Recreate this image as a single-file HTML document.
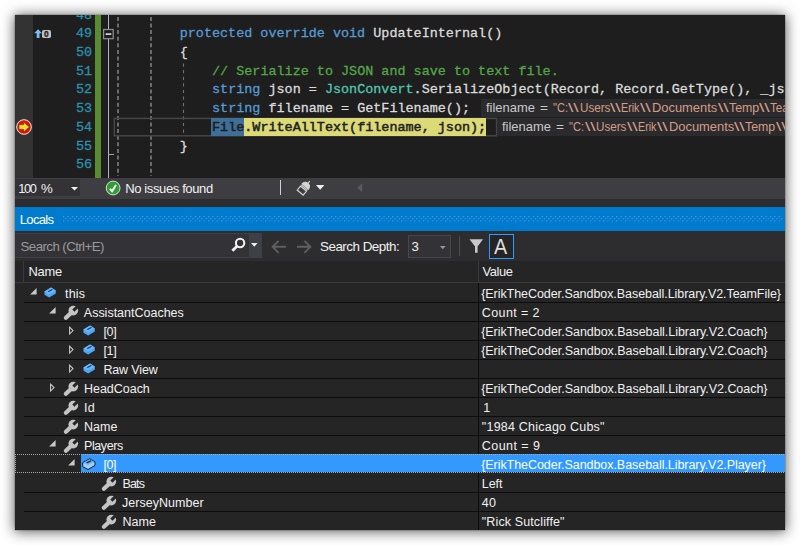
<!DOCTYPE html>
<html><head><meta charset="utf-8"><title>Locals</title>
<style>
html,body{margin:0;padding:0;background:#fff;width:800px;height:545px;overflow:hidden}
.win{position:absolute;left:15px;top:15px;width:770px;height:514.5px;overflow:hidden;background:#252526;box-shadow:0 1px 12px 1px rgba(0,0,0,0.62),0 0 1px rgba(0,0,0,0.8)}
.o{position:absolute;left:-15px;top:-15px;width:800px;height:545px}
.o>*{position:absolute;white-space:pre}
.o>div{box-sizing:content-box}
.s{font-family:"Liberation Sans", sans-serif}
.m{font-family:"Liberation Mono", monospace;font-size:13.450px;line-height:18.7px;padding-top:1.4px;-webkit-text-stroke:0.28px}
.il{font-size:13.4px;line-height:20px;width:300px;height:20px}
.il>span{position:absolute;top:0;transform-origin:0 0;white-space:pre}
svg{overflow:visible}
</style></head><body>
<div class="win"><div class="o">
<div style="left:15px;top:15px;width:770px;height:163px;background:#1e1e1e;"></div>
<div style="left:15px;top:15px;width:18px;height:163px;background:#333333;"></div>
<div style="left:95px;top:15px;width:5.7px;height:163px;background:#5a8a33;"></div>
<div style="left:107.6px;top:15px;width:1.2px;height:163px;background:#b4b4b4;"></div>
<div style="left:108px;top:154px;width:5.5px;height:1.1px;background:#a5a5a5;"></div>
<svg style="left:0;top:0" width="800" height="545"><rect x="103.6" y="29.5" width="9.6" height="9.2" fill="#1e1e1e" stroke="#8e8e8e" stroke-width="1.2"/><path d="M105.6 34.1H111.3" stroke="#d6d6d6" stroke-width="1.7"/></svg>
<svg style="left:0;top:0" width="800" height="545"><path d="M118.0 15V176" stroke="#858585" stroke-width="1.5" stroke-dasharray="4 2.6" stroke-dashoffset="-1.9" fill="none"/></svg>
<svg style="left:0;top:0" width="800" height="545"><path d="M151.0 15V176" stroke="#858585" stroke-width="1.5" stroke-dasharray="4 2.6" stroke-dashoffset="-1.9" fill="none"/></svg>
<svg style="left:0;top:0" width="800" height="545"><path d="M183.5 62V133.5" stroke="#707070" stroke-width="1.1" stroke-dasharray="3.2 3.4" stroke-dashoffset="-1.5" fill="none"/></svg>
<svg style="left:0;top:0" width="800" height="545"><rect x="114.3" y="118.4" width="382.3" height="17.4" fill="none" stroke="#464646" stroke-width="1.5"/></svg>
<div style="left:497px;top:118px;width:288px;height:17.8px;background:#2b2b2d;"></div>
<div style="left:480.6px;top:99.4px;width:305px;height:17.6px;background:#2b2b2d;"></div>
<div style="left:211.3px;top:118px;width:32.6px;height:18.3px;background:#3f6f99;"></div>
<div style="left:243.9px;top:118px;width:242.6px;height:18.3px;background:#dcd977;"></div>
<span class="m" style="left:76.0px;top:5.30px;color:#2b91af">48</span>
<span class="m" style="left:76.0px;top:24.00px;color:#2b91af">49</span>
<span class="m" style="left:76.0px;top:42.70px;color:#2b91af">50</span>
<span class="m" style="left:76.0px;top:61.40px;color:#2b91af">51</span>
<span class="m" style="left:76.0px;top:80.10px;color:#2b91af">52</span>
<span class="m" style="left:76.0px;top:98.80px;color:#2b91af">53</span>
<span class="m" style="left:76.0px;top:117.50px;color:#2b91af">54</span>
<span class="m" style="left:76.0px;top:136.20px;color:#2b91af">55</span>
<span class="m" style="left:76.0px;top:154.90px;color:#2b91af">56</span>
<span class="m" style="left:179.72px;top:24.00px"><span style="color:#569cd6">protected override void</span><span style="color:#dcdcdc"> UpdateInternal()</span></span>
<span class="m" style="left:179.72px;top:42.70px"><span style="color:#dcdcdc">{</span></span>
<span class="m" style="left:212.00px;top:61.40px"><span style="color:#57a64a">// Serialize to JSON and save to text file.</span></span>
<span class="m" style="left:212.00px;top:80.10px"><span style="color:#569cd6">string</span><span style="color:#dcdcdc"> json = </span><span style="color:#4ec9b0">JsonConvert</span><span style="color:#dcdcdc">.SerializeObject(Record, Record.GetType(), _jsonSettings);</span></span>
<span class="m" style="left:212.00px;top:98.80px"><span style="color:#569cd6">string</span><span style="color:#dcdcdc"> filename = GetFilename();</span></span>
<span class="m" style="left:212.00px;top:117.50px"><span style="color:#1e1e1e;-webkit-text-stroke:0.5px">File.WriteAllText(filename, json);</span></span>
<span class="m" style="left:179.72px;top:136.20px"><span style="color:#dcdcdc">}</span></span>
<span class="s il" style="left:486px;top:98px"><span style="left:0.0px;color:#c8c8c8;transform:scaleX(0.967)">filename</span><span style="left:53.9px;color:#c8c8c8;transform:scaleX(1.021)">=</span><span style="left:66.5px;color:#d69d85;transform:scaleX(0.826)">"C:</span><span style="left:82.4px;color:#d69d85;transform:scaleX(1.439)">\\</span><span style="left:93.8px;color:#d69d85;transform:scaleX(0.869)">Users</span><span style="left:124.4px;color:#d69d85;transform:scaleX(1.439)">\\</span><span style="left:135.2px;color:#d69d85;transform:scaleX(0.800)">Erik</span><span style="left:154.2px;color:#d69d85;transform:scaleX(1.439)">\\</span><span style="left:166.2px;color:#d69d85;transform:scaleX(0.962)">Documents</span><span style="left:231.6px;color:#d69d85;transform:scaleX(1.439)">\\</span><span style="left:242.6px;color:#d69d85;transform:scaleX(0.922)">Temp</span><span style="left:273.4px;color:#d69d85;transform:scaleX(1.439)">\\</span><span style="left:283.9px;color:#d69d85;transform:scaleX(0.870)">Team</span><span style="left:322.0px;color:#d69d85;transform:scaleX(0.939)">1984</span><span style="left:354.0px;color:#d69d85;transform:scaleX(0.976)">Chicago</span><span style="left:406.0px;color:#d69d85;transform:scaleX(0.933)">Cubs.json"</span></span>
<span class="s il" style="left:502.4px;top:116.6px"><span style="left:0.0px;color:#c8c8c8;transform:scaleX(0.967)">filename</span><span style="left:53.9px;color:#c8c8c8;transform:scaleX(1.021)">=</span><span style="left:66.5px;color:#d69d85;transform:scaleX(0.826)">"C:</span><span style="left:82.4px;color:#d69d85;transform:scaleX(1.439)">\\</span><span style="left:93.8px;color:#d69d85;transform:scaleX(0.869)">Users</span><span style="left:124.4px;color:#d69d85;transform:scaleX(1.439)">\\</span><span style="left:135.2px;color:#d69d85;transform:scaleX(0.800)">Erik</span><span style="left:154.2px;color:#d69d85;transform:scaleX(1.439)">\\</span><span style="left:166.2px;color:#d69d85;transform:scaleX(0.962)">Documents</span><span style="left:231.6px;color:#d69d85;transform:scaleX(1.439)">\\</span><span style="left:242.6px;color:#d69d85;transform:scaleX(0.922)">Temp</span><span style="left:273.4px;color:#d69d85;transform:scaleX(1.439)">\\</span><span style="left:283.9px;color:#d69d85;transform:scaleX(0.870)">Team</span><span style="left:322.0px;color:#d69d85;transform:scaleX(0.939)">1984</span><span style="left:354.0px;color:#d69d85;transform:scaleX(0.976)">Chicago</span><span style="left:406.0px;color:#d69d85;transform:scaleX(0.933)">Cubs.json"</span></span>
<svg style="left:16px;top:118.5px" width="16" height="16" viewBox="0 0 16 16"><circle cx="8" cy="8" r="7.3" fill="#e51400" stroke="#f4e8e8" stroke-width="1"/><path d="M2.9 5.6H7.5V3.1L13.6 8L7.5 12.9V10.4H2.9Z" fill="#ffd82a" stroke="#5a3a2a" stroke-width="0.8" stroke-linejoin="round"/></svg>
<svg style="left:34px;top:29px" width="9" height="10" viewBox="0 0 9 10"><path d="M4.1 0.2L8 4.3H5.5V9H2.7V4.3H0.2Z" fill="#75beff"/></svg>
<div style="left:42.4px;top:30.3px;width:8.2px;height:7.8px;background:#c2c2c2;border-radius:1.8px"></div>
<span class="s" style="left:43.9px;top:29.7px;font-size:8.4px;line-height:9px;font-weight:bold;color:#1e1e1e;-webkit-text-stroke:0.3px #1e1e1e">0</span>
<div style="left:15px;top:178px;width:770px;height:20.5px;background:#3e3e42;"></div>
<div style="left:15px;top:179px;width:65px;height:17px;background:#333337;"></div>
<div style="left:15px;top:198.5px;width:770px;height:8.6px;background:#2d2d30;"></div>
<span class="s" style="left:18.2px;top:178.50px;font-size:12.8px;line-height:20px;color:#f1f1f1;letter-spacing:-1.288px;">100</span>
<span class="s" style="left:41.0px;top:178.50px;font-size:13.2px;line-height:20px;color:#f1f1f1;letter-spacing:-2.248px;">%</span>
<svg style="left:71px;top:186.5px" width="7" height="4" viewBox="0 0 7 4"><path d="M0 0H7L3.5 3.6Z" fill="#f1f1f1"/></svg>
<svg style="left:105px;top:179.5px" width="16" height="16" viewBox="0 0 16 16"><circle cx="8.1" cy="8" r="6.9" fill="#2f9e34" stroke="#dcdcdc" stroke-width="1"/><path d="M5 8.8L7.1 11.2L11 4.9" fill="none" stroke="#fff" stroke-width="1.9"/></svg>
<span class="s" style="left:125.3px;top:178.50px;font-size:13px;line-height:20px;color:#f1f1f1;letter-spacing:-0.386px;">No issues found</span>
<div style="left:280.2px;top:180px;width:1.3px;height:14.5px;background:#d0d0d0;"></div>
<svg style="left:296px;top:179px" width="17" height="17" viewBox="0 0 17 17"><g transform="rotate(40 8.5 8.5)" fill="none" stroke="#d6d6d6" stroke-width="1.1"><path d="M8.5 0.2V3.2"/><path d="M4.4 7.2A4.1 4.1 0 0 1 12.6 7.2Z" fill="#d6d6d6"/><path d="M4.4 8.6H12.6"/><rect x="4.6" y="10" width="7.8" height="5.2"/></g></svg>
<svg style="left:315.5px;top:185px" width="9" height="5" viewBox="0 0 9 5"><path d="M0 0H8.4L4.2 4.8Z" fill="#f1f1f1"/></svg>
<svg style="left:357px;top:183px" width="6" height="10" viewBox="0 0 6 10"><path d="M5.2 0.2V9.2L0.2 4.7Z" fill="#5a5a5e"/></svg>
<div style="left:15px;top:206.6px;width:770px;height:24.6px;background:#007acc;"></div>
<span class="s" style="left:19.8px;top:209.50px;font-size:13.1px;line-height:20px;color:#ffffff;letter-spacing:-0.732px;">Locals</span>
<div style="left:62.9px;top:216.1px;width:720px;height:5.6px;background-image:radial-gradient(circle at 0.55px 0.55px,#46a0e2 0.6px,transparent 0.9px),radial-gradient(circle at 0.55px 0.55px,#46a0e2 0.6px,transparent 0.9px);background-size:4.4px 4.4px;background-position:0 0,2.2px 2.2px"></div>
<div style="left:15px;top:231.4px;width:770px;height:29.6px;background:#2d2d30;"></div>
<div style="left:15px;top:233px;width:247.2px;height:24.7px;background:#3f3f46;"></div>
<div style="left:15px;top:234.2px;width:233.8px;height:22.4px;background:#333337;"></div>
<span class="s" style="left:20.6px;top:236.50px;font-size:13.3px;line-height:20px;color:#999999;letter-spacing:-0.588px;">Search (Ctrl+E)</span>
<svg style="left:230px;top:236px" width="17" height="17" viewBox="0 0 17 17"><circle cx="10.1" cy="7" r="4.2" fill="none" stroke="#f1f1f1" stroke-width="2.1"/><path d="M7.2 10L2.4 14.8" stroke="#f1f1f1" stroke-width="2.8"/></svg>
<svg style="left:251.2px;top:243px" width="7" height="4" viewBox="0 0 7 4"><path d="M0 0H6.6L3.3 3.7Z" fill="#f1f1f1"/></svg>
<svg style="left:271px;top:239px" width="16" height="16" viewBox="0 0 16 16"><path d="M15 7.8H2.2M7.6 1.8L1.6 7.8L7.6 13.8" fill="none" stroke="#5f5f63" stroke-width="1.9"/></svg>
<svg style="left:295.5px;top:239px" width="16" height="16" viewBox="0 0 16 16"><path d="M1 7.8H13.8M8.4 1.8L14.4 7.8L8.4 13.8" fill="none" stroke="#5f5f63" stroke-width="1.9"/></svg>
<span class="s" style="left:320.0px;top:236.50px;font-size:13.4px;line-height:20px;color:#f1f1f1;letter-spacing:-0.499px;">Search Depth:</span>
<div style="left:407.5px;top:235.2px;width:41.2px;height:20.4px;background:#333337;border:1.1px solid #47474b"></div>
<span class="s" style="left:411.6px;top:236.50px;font-size:13.2px;line-height:20px;color:#f1f1f1;">3</span>
<svg style="left:440px;top:245.5px" width="6" height="4" viewBox="0 0 6 4"><path d="M0 0H5.6L2.8 3.3Z" fill="#999"/></svg>
<div style="left:458.7px;top:236px;width:1.1px;height:20px;background:#4d4d50;"></div>
<svg style="left:469px;top:239px" width="15" height="15" viewBox="0 0 15 15"><path d="M0.5 0.3H14L8.6 7.4V13.8H6V7.4Z" fill="#c8c8c8"/></svg>
<div style="left:488.8px;top:233.8px;width:22.8px;height:22.8px;background:#252526;border:1.1px solid #3399ff"></div>
<span class="s" style="left:494.3px;top:234.5px;font-size:21.5px;line-height:24px;color:#dedede;transform:scaleX(0.92);transform-origin:0 0">A</span>
<div style="left:15px;top:261px;width:770px;height:270px;background:#252526;"></div>
<div style="left:15px;top:282.1px;width:770px;height:1px;background:#3a3a3d;"></div>
<div style="left:23px;top:261px;width:1px;height:21.4px;background:#3a3a3d;"></div>
<div style="left:477.6px;top:261px;width:1px;height:21.4px;background:#38383b;"></div>
<div style="left:477.5px;top:283px;width:1.1px;height:250px;background:#0c0c0c;"></div>
<span class="s" style="left:28.5px;top:262.00px;font-size:12.9px;line-height:20px;color:#f1f1f1;letter-spacing:-0.248px;">Name</span>
<span class="s" style="left:482.4px;top:262.00px;font-size:12.9px;line-height:20px;color:#f1f1f1;letter-spacing:-0.364px;">Value</span>
<div style="left:24px;top:301.6px;width:761px;height:1.1px;background:#0c0c0c;"></div>
<svg style="left:30.0px;top:288.3px" width="7" height="7" viewBox="0 0 7 7"><path d="M6.6 0.1V6.6H0.1Z" fill="#c8c8c8"/></svg>
<svg style="left:44.3px;top:287.1px" width="13" height="11" viewBox="0 0 13 11"><path d="M0.4 4.5L7.1 0.5L11.8 3.5V6.6L5.2 10.5L0.5 7.8Z" fill="#4fa6f7"/><path d="M0.4 4.5L7.1 0.5L11.8 3.5L5.2 7.3Z" fill="#6bb7ff"/><path d="M3.7 4.2L7.9 2L9 2.7L4.8 4.9Z" fill="#1d3c5c"/></svg>
<span class="s" style="left:65.0px;top:284.00px;font-size:12.5px;line-height:20px;color:#f1f1f1;letter-spacing:0.188px;">this</span>
<span class="s" style="left:481.2px;top:284.00px;font-size:12.5px;line-height:20px;color:#f1f1f1;letter-spacing:-0.059px;">{ErikTheCoder.Sandbox.Baseball.Library.V2.TeamFile}</span>
<div style="left:24px;top:320.6px;width:761px;height:1.1px;background:#0c0c0c;"></div>
<svg style="left:49.2px;top:307.3px" width="7" height="7" viewBox="0 0 7 7"><path d="M6.6 0.1V6.6H0.1Z" fill="#c8c8c8"/></svg>
<svg style="left:62.6px;top:304.9px" width="16" height="16" viewBox="0 0 16 16"><path d="M10.3 5.9L2.9 12.8" stroke="#c4c4c4" stroke-width="4.2" stroke-linecap="round" fill="none"/><circle cx="10.3" cy="5.6" r="4.85" fill="#c4c4c4"/><path d="M9.3 4.5L14.4 -0.6L16.6 1.6L11.5 6.7Z" fill="#252526"/></svg>
<span class="s" style="left:83.8px;top:303.00px;font-size:12.5px;line-height:20px;color:#f1f1f1;letter-spacing:-0.004px;">AssistantCoaches</span>
<span class="s" style="left:481.8px;top:303.00px;font-size:12.5px;line-height:20px;color:#f1f1f1;letter-spacing:0.392px;">Count = 2</span>
<div style="left:24px;top:339.6px;width:761px;height:1.1px;background:#0c0c0c;"></div>
<svg style="left:68.8px;top:326.0px" width="6" height="10" viewBox="0 0 6 10"><path d="M0.6 1.2L4 4.6L0.6 8Z" fill="none" stroke="#cdcdcd" stroke-width="1.05"/></svg>
<svg style="left:82.7px;top:325.1px" width="13" height="11" viewBox="0 0 13 11"><path d="M0.4 4.5L7.1 0.5L11.8 3.5V6.6L5.2 10.5L0.5 7.8Z" fill="#4fa6f7"/><path d="M0.4 4.5L7.1 0.5L11.8 3.5L5.2 7.3Z" fill="#6bb7ff"/><path d="M3.7 4.2L7.9 2L9 2.7L4.8 4.9Z" fill="#1d3c5c"/></svg>
<span class="s" style="left:103.4px;top:322.00px;font-size:12.5px;line-height:20px;color:#f1f1f1;letter-spacing:-0.338px;">[0]</span>
<span class="s" style="left:481.2px;top:322.00px;font-size:12.5px;line-height:20px;color:#f1f1f1;letter-spacing:-0.039px;">{ErikTheCoder.Sandbox.Baseball.Library.V2.Coach}</span>
<div style="left:24px;top:358.6px;width:761px;height:1.1px;background:#0c0c0c;"></div>
<svg style="left:68.8px;top:345.0px" width="6" height="10" viewBox="0 0 6 10"><path d="M0.6 1.2L4 4.6L0.6 8Z" fill="none" stroke="#cdcdcd" stroke-width="1.05"/></svg>
<svg style="left:82.7px;top:344.1px" width="13" height="11" viewBox="0 0 13 11"><path d="M0.4 4.5L7.1 0.5L11.8 3.5V6.6L5.2 10.5L0.5 7.8Z" fill="#4fa6f7"/><path d="M0.4 4.5L7.1 0.5L11.8 3.5L5.2 7.3Z" fill="#6bb7ff"/><path d="M3.7 4.2L7.9 2L9 2.7L4.8 4.9Z" fill="#1d3c5c"/></svg>
<span class="s" style="left:103.4px;top:341.00px;font-size:12.5px;line-height:20px;color:#f1f1f1;letter-spacing:-0.338px;">[1]</span>
<span class="s" style="left:481.2px;top:341.00px;font-size:12.5px;line-height:20px;color:#f1f1f1;letter-spacing:-0.039px;">{ErikTheCoder.Sandbox.Baseball.Library.V2.Coach}</span>
<div style="left:24px;top:377.6px;width:761px;height:1.1px;background:#0c0c0c;"></div>
<svg style="left:68.8px;top:364.0px" width="6" height="10" viewBox="0 0 6 10"><path d="M0.6 1.2L4 4.6L0.6 8Z" fill="none" stroke="#cdcdcd" stroke-width="1.05"/></svg>
<svg style="left:82.7px;top:363.1px" width="13" height="11" viewBox="0 0 13 11"><path d="M0.4 4.5L7.1 0.5L11.8 3.5V6.6L5.2 10.5L0.5 7.8Z" fill="#4fa6f7"/><path d="M0.4 4.5L7.1 0.5L11.8 3.5L5.2 7.3Z" fill="#6bb7ff"/><path d="M3.7 4.2L7.9 2L9 2.7L4.8 4.9Z" fill="#1d3c5c"/></svg>
<span class="s" style="left:103.4px;top:360.00px;font-size:12.5px;line-height:20px;color:#f1f1f1;letter-spacing:-0.139px;">Raw View</span>
<div style="left:24px;top:396.6px;width:761px;height:1.1px;background:#0c0c0c;"></div>
<svg style="left:49.6px;top:383.0px" width="6" height="10" viewBox="0 0 6 10"><path d="M0.6 1.2L4 4.6L0.6 8Z" fill="none" stroke="#cdcdcd" stroke-width="1.05"/></svg>
<svg style="left:62.6px;top:380.9px" width="16" height="16" viewBox="0 0 16 16"><path d="M10.3 5.9L2.9 12.8" stroke="#c4c4c4" stroke-width="4.2" stroke-linecap="round" fill="none"/><circle cx="10.3" cy="5.6" r="4.85" fill="#c4c4c4"/><path d="M9.3 4.5L14.4 -0.6L16.6 1.6L11.5 6.7Z" fill="#252526"/></svg>
<span class="s" style="left:84.0px;top:379.00px;font-size:12.5px;line-height:20px;color:#f1f1f1;letter-spacing:-0.025px;">HeadCoach</span>
<span class="s" style="left:481.2px;top:379.00px;font-size:12.5px;line-height:20px;color:#f1f1f1;letter-spacing:-0.039px;">{ErikTheCoder.Sandbox.Baseball.Library.V2.Coach}</span>
<div style="left:24px;top:415.6px;width:761px;height:1.1px;background:#0c0c0c;"></div>
<svg style="left:62.6px;top:399.9px" width="16" height="16" viewBox="0 0 16 16"><path d="M10.3 5.9L2.9 12.8" stroke="#c4c4c4" stroke-width="4.2" stroke-linecap="round" fill="none"/><circle cx="10.3" cy="5.6" r="4.85" fill="#c4c4c4"/><path d="M9.3 4.5L14.4 -0.6L16.6 1.6L11.5 6.7Z" fill="#252526"/></svg>
<span class="s" style="left:84.0px;top:398.00px;font-size:12.5px;line-height:20px;color:#f1f1f1;letter-spacing:0.162px;">Id</span>
<span class="s" style="left:483.2px;top:398.00px;font-size:12.5px;line-height:20px;color:#f1f1f1;letter-spacing:-3.137px;">1</span>
<div style="left:24px;top:434.6px;width:761px;height:1.1px;background:#0c0c0c;"></div>
<svg style="left:62.6px;top:418.9px" width="16" height="16" viewBox="0 0 16 16"><path d="M10.3 5.9L2.9 12.8" stroke="#c4c4c4" stroke-width="4.2" stroke-linecap="round" fill="none"/><circle cx="10.3" cy="5.6" r="4.85" fill="#c4c4c4"/><path d="M9.3 4.5L14.4 -0.6L16.6 1.6L11.5 6.7Z" fill="#252526"/></svg>
<span class="s" style="left:84.0px;top:417.00px;font-size:12.5px;line-height:20px;color:#f1f1f1;letter-spacing:0.042px;">Name</span>
<span class="s" style="left:481.8px;top:417.00px;font-size:12.5px;line-height:20px;color:#f1f1f1;letter-spacing:0.223px;">"1984 Chicago Cubs"</span>
<svg style="left:49.2px;top:440.3px" width="7" height="7" viewBox="0 0 7 7"><path d="M6.6 0.1V6.6H0.1Z" fill="#c8c8c8"/></svg>
<svg style="left:62.6px;top:437.9px" width="16" height="16" viewBox="0 0 16 16"><path d="M10.3 5.9L2.9 12.8" stroke="#c4c4c4" stroke-width="4.2" stroke-linecap="round" fill="none"/><circle cx="10.3" cy="5.6" r="4.85" fill="#c4c4c4"/><path d="M9.3 4.5L14.4 -0.6L16.6 1.6L11.5 6.7Z" fill="#252526"/></svg>
<span class="s" style="left:84.0px;top:436.00px;font-size:12.5px;line-height:20px;color:#f1f1f1;letter-spacing:-0.398px;">Players</span>
<span class="s" style="left:481.8px;top:436.00px;font-size:12.5px;line-height:20px;color:#f1f1f1;letter-spacing:0.455px;">Count = 9</span>
<div style="left:81px;top:454.0px;width:704px;height:17.5px;background:#3399ff;"></div>
<div style="left:15px;top:454px;width:775px;height:17.4px;border:1px dotted #a8a8a8"></div>
<svg style="left:68.4px;top:459.3px" width="7" height="7" viewBox="0 0 7 7"><path d="M6.6 0.1V6.6H0.1Z" fill="#c8c8c8"/></svg>
<svg style="left:81.9px;top:458.0px" width="14" height="13" viewBox="0 0 14 13"><path d="M0.7 4.7L7.6 0.7L13 3.8V7.4L6 11.6L0.7 8.6Z" fill="#9ccfff" stroke="#1e1e1e" stroke-width="1" stroke-linejoin="round"/><path d="M1.6 4.8L7.6 1.4L12 3.9L6 7.1Z" fill="#62b2ff"/><path d="M4.2 4.5L8.4 2.3L9.6 3L5.4 5.2Z" fill="#1e1e1e"/></svg>
<span class="s" style="left:103.6px;top:455.00px;font-size:12.5px;line-height:20px;color:#ffffff;letter-spacing:-0.487px;">[0]</span>
<span class="s" style="left:481.2px;top:455.00px;font-size:12.5px;line-height:20px;color:#ffffff;letter-spacing:-0.055px;">{ErikTheCoder.Sandbox.Baseball.Library.V2.Player}</span>
<div style="left:24px;top:491.6px;width:761px;height:1.1px;background:#0c0c0c;"></div>
<svg style="left:101.0px;top:475.9px" width="16" height="16" viewBox="0 0 16 16"><path d="M10.3 5.9L2.9 12.8" stroke="#c4c4c4" stroke-width="4.2" stroke-linecap="round" fill="none"/><circle cx="10.3" cy="5.6" r="4.85" fill="#c4c4c4"/><path d="M9.3 4.5L14.4 -0.6L16.6 1.6L11.5 6.7Z" fill="#252526"/></svg>
<span class="s" style="left:122.4px;top:474.00px;font-size:12.5px;line-height:20px;color:#f1f1f1;letter-spacing:-0.8px;">Bats</span>
<span class="s" style="left:481.8px;top:474.00px;font-size:12.5px;line-height:20px;color:#f1f1f1;letter-spacing:-0.092px;">Left</span>
<div style="left:24px;top:510.6px;width:761px;height:1.1px;background:#0c0c0c;"></div>
<svg style="left:101.0px;top:494.9px" width="16" height="16" viewBox="0 0 16 16"><path d="M10.3 5.9L2.9 12.8" stroke="#c4c4c4" stroke-width="4.2" stroke-linecap="round" fill="none"/><circle cx="10.3" cy="5.6" r="4.85" fill="#c4c4c4"/><path d="M9.3 4.5L14.4 -0.6L16.6 1.6L11.5 6.7Z" fill="#252526"/></svg>
<span class="s" style="left:122.0px;top:493.00px;font-size:12.5px;line-height:20px;color:#f1f1f1;letter-spacing:0.032px;">JerseyNumber</span>
<span class="s" style="left:481.8px;top:493.00px;font-size:12.5px;line-height:20px;color:#f1f1f1;letter-spacing:0.225px;">40</span>
<div style="left:24px;top:529.6px;width:761px;height:1.1px;background:#0c0c0c;"></div>
<svg style="left:101.0px;top:513.9px" width="16" height="16" viewBox="0 0 16 16"><path d="M10.3 5.9L2.9 12.8" stroke="#c4c4c4" stroke-width="4.2" stroke-linecap="round" fill="none"/><circle cx="10.3" cy="5.6" r="4.85" fill="#c4c4c4"/><path d="M9.3 4.5L14.4 -0.6L16.6 1.6L11.5 6.7Z" fill="#252526"/></svg>
<span class="s" style="left:122.4px;top:512.00px;font-size:12.5px;line-height:20px;color:#f1f1f1;letter-spacing:0.075px;">Name</span>
<span class="s" style="left:481.8px;top:512.00px;font-size:12.5px;line-height:20px;color:#f1f1f1;letter-spacing:0.122px;">"Rick Sutcliffe"</span>
</div></div>
</body></html>
